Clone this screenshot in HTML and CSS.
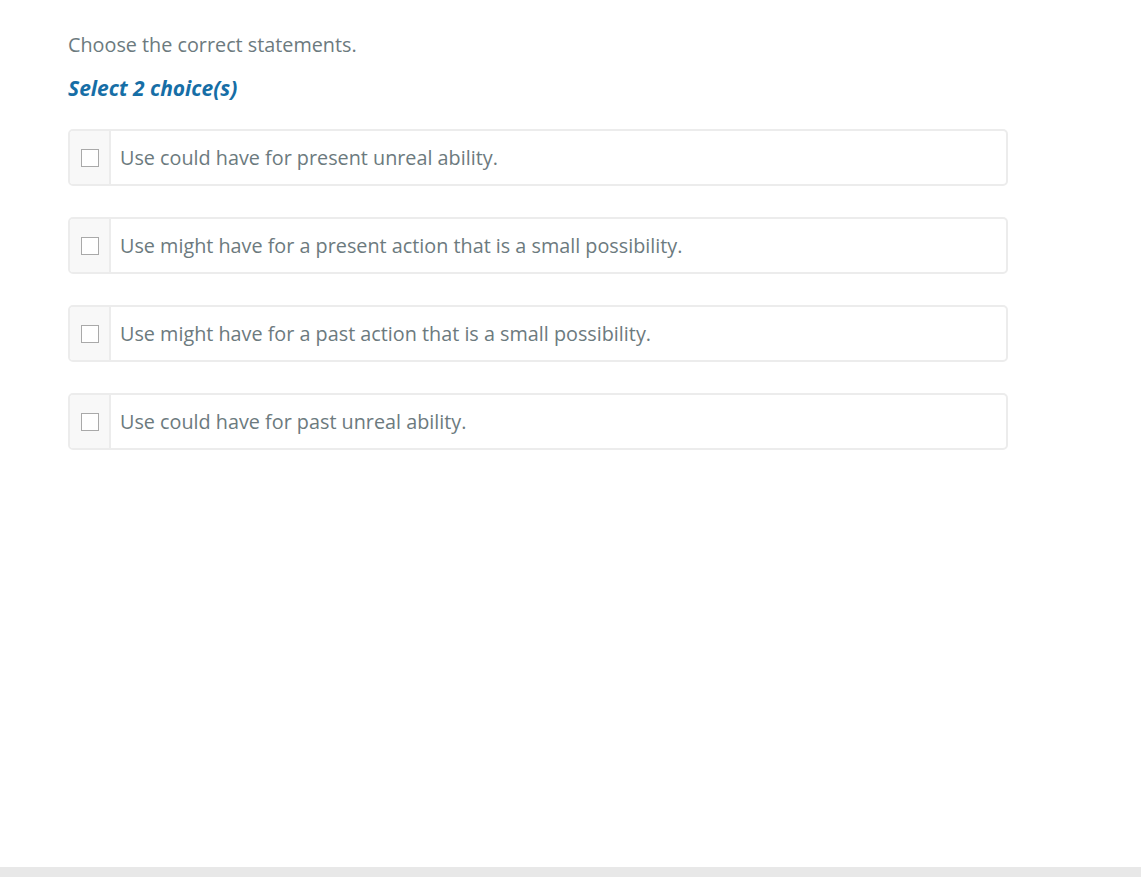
FILE: index.html
```html
<!DOCTYPE html>
<html>
<head>
<meta charset="utf-8">
<link rel="stylesheet" href="styles.css">
</head>
<body>
<div class="page">
  <main class="content">
    <p class="prompt">Choose the correct statements.</p>
    <p class="hint">Select 2 choice(s)</p>
    <ul class="choices">
      <li class="choice"><span class="check"><span class="box"></span></span><span class="label">Use could have for present unreal ability.</span></li>
      <li class="choice"><span class="check"><span class="box"></span></span><span class="label">Use might have for a present action that is a small possibility.</span></li>
      <li class="choice"><span class="check"><span class="box"></span></span><span class="label">Use might have for a past action that is a small possibility.</span></li>
      <li class="choice"><span class="check"><span class="box"></span></span><span class="label">Use could have for past unreal ability.</span></li>
    </ul>
  </main>
  <div class="footer-bar"></div>
</div>
</body>
</html>
```
FILE: styles.css
```css
html, body {
  margin: 0;
  padding: 0;
  background: #fff;
}
.page {
  height: 877px;
  display: flex;
  flex-direction: column;
  font-family: "Open Sans", "Noto Sans", sans-serif;
}
.content {
  flex: 1;
  padding: 31px 0 0 68px;
}
.prompt {
  margin: 0;
  font-size: 19.8px;
  line-height: 28px;
  color: #6c7a7e;
}
.hint {
  margin: 15px 0 0;
  font-size: 21px;
  line-height: 28px;
  font-weight: 700;
  font-style: italic;
  color: #166ea6;
}
.choices {
  list-style: none;
  margin: 27px 0 0;
  padding: 0;
  width: 940px;
  display: flex;
  flex-direction: column;
  gap: 31px;
}
.choice {
  display: flex;
  height: 57px;
  box-sizing: border-box;
  border: 2px solid #ececec;
  border-radius: 5px;
  overflow: hidden;
}
.check {
  width: 39px;
  flex: none;
  background: #f8f8f8;
  border-right: 2px solid #ececec;
  display: flex;
  align-items: center;
  justify-content: center;
}
.box {
  width: 16px;
  height: 16px;
  border: 1px solid #a9a9a9;
  background: #fff;
}
.label {
  display: flex;
  align-items: center;
  padding-left: 9px;
  font-size: 19.8px;
  color: #6c7a7e;
}
.footer-bar {
  height: 10px;
  background: #e8e8e8;
}
```
